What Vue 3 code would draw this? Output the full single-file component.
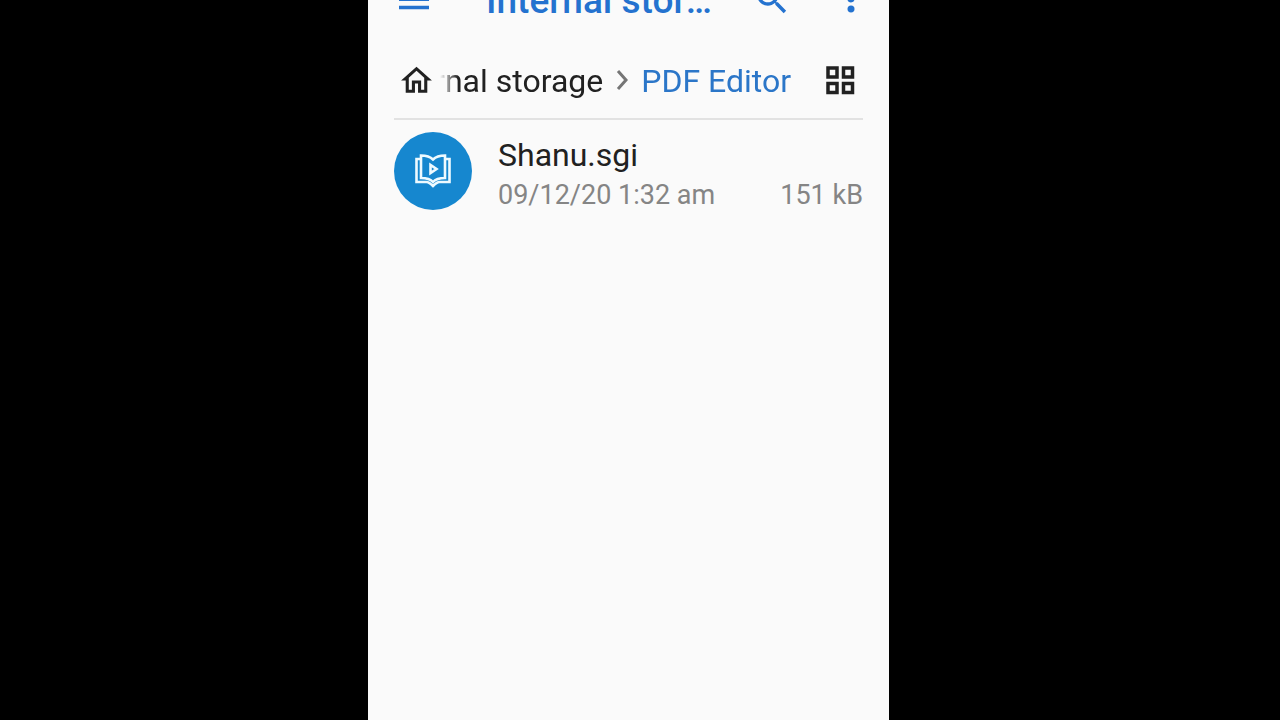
<script setup>
const title = 'Internal storage'
const files = [{ name: 'Shanu.sgi', date: '09/12/20 1:32 am', size: '151 kB' }]
</script>

<template>
  <div class="stage">
    <main class="screen">
      <header class="bar">
        <button class="icon" aria-label="Menu">
          <svg viewBox="0 0 24 24"><path d="M3 18.200h18v-2.200H3v2.200zm0-5h18v-2.200H3v2.200zm0-7.200v2.200h18V6H3z" /></svg>
        </button>
        <h1>{{ title }}</h1>
        <button class="icon search" aria-label="Search">
          <svg viewBox="0 0 24 24">
            <path d="M15.5 14h-.79l-.28-.27A6.47 6.47 0 0 0 16 9.5 6.5 6.5 0 1 0 9.5 16c1.61 0 3.09-.59 4.23-1.57l.27.28v.79l5 4.99L20.49 19l-4.99-5zm-6 0C7.01 14 5 11.99 5 9.5S7.01 5 9.5 5 14 7.01 14 9.5 11.99 14 9.5 14z" />
          </svg>
        </button>
        <button class="icon more" aria-label="More options">
          <svg viewBox="0 0 24 24">
            <circle cx="12" cy="6" r="2.1" /><circle cx="12" cy="12" r="2.1" /><circle cx="12" cy="18" r="2.1" />
          </svg>
        </button>
      </header>

      <nav class="path" aria-label="Folder path">
        <button class="home" aria-label="Home">
          <svg viewBox="0 0 24 24"><path d="M12 5.69l5 4.5V18h-2v-6H9v6H7v-7.81l5-4.5M12 3L2 12h3v8h6v-6h2v6h6v-8h3L12 3z" /></svg>
        </button>
        <div class="crumbs">
          <a href="#storage">{{ title }}</a>
          <svg class="chevron" viewBox="0 0 12 20"><path d="M2 1l8 9-8 9" /></svg>
          <a href="#pdf-editor" class="current" aria-current="page">PDF Editor</a>
        </div>
        <button class="view" aria-label="Grid view">
          <svg viewBox="0 0 30 30">
            <path d="M3 3h9v9H3zM18.500 3h9v9h-9zM3 18.500h9v9H3zM18.500 18.500h9v9h-9z" />
          </svg>
        </button>
      </nav>

      <ul class="files">
        <li v-for="file in files" :key="file.name">
          <span class="badge">
            <svg viewBox="0 0 36 34">
              <path d="M6 1.500c5 0 9 1 12 4 3-3 7-4 12-4v22.500c-5 0-9 .5-12 4-3-3.500-7-4-12-4z" />
              <path d="M6 5H1.500v23h10c2.500 0 4.500 2 6.500 4 2-2 4-4 6.500-4h10V5H30" />
              <path class="play" d="M15.500 11v8l6-4z" />
            </svg>
          </span>
          <div class="info">
            <span class="name">{{ file.name }}</span>
            <div class="meta"><span>{{ file.date }}</span><span>{{ file.size }}</span></div>
          </div>
        </li>
      </ul>
    </main>
  </div>
</template>

<style>
body {
  background: #000;
}
</style>

<style scoped>
.stage {
  display: grid;
  grid-template-columns: 368fr 521fr 391fr;
  min-height: 100vh;
  background: #000;
  font-family: Roboto, "Liberation Sans", sans-serif;
  overflow: hidden;
}
.screen {
  grid-column: 2;
  min-width: 0;
  padding: 0 26px;
  background: #fafafa;
  color: #212121;
}
button {
  flex: none;
  padding: 0;
  border: 0;
  background: none;
  color: inherit;
}
svg {
  display: block;
  width: 100%;
  fill: currentColor;
}
.bar {
  display: flex;
  align-items: center;
  height: 72px;
  margin-top: -37px;
  color: #2472cf;
}
.icon {
  width: 40px;
}
h1 {
  flex: 1;
  min-width: 0;
  margin: 0 32px 0 52px;
  padding-top: 4px;
  overflow: hidden;
  white-space: nowrap;
  text-overflow: ellipsis;
  font-size: 37px;
  line-height: 48px;
  font-weight: 500;
}
.more {
  margin: 0 -8px 0 39px;
}
.path {
  display: flex;
  align-items: center;
  height: 85px;
  padding: 7px 8px 0 4px;
  border-bottom: 2px solid #e2e2e2;
  box-sizing: border-box;
}
.home {
  width: 37px;
}
.crumbs {
  display: flex;
  flex: 1;
  justify-content: flex-end;
  align-items: center;
  min-width: 0;
  margin: 0 34px 0 5px;
  overflow: hidden;
  white-space: nowrap;
  font-size: 32px;
  line-height: 44px;
  mask-image: linear-gradient(to right, transparent, #000 18px);
}
.crumbs a {
  padding-top: 2px;
  color: inherit;
  text-decoration: none;
}
.crumbs .current {
  color: #2b76c8;
}
.chevron {
  flex: none;
  width: 12px;
  margin: 0 13px;
  fill: none;
  stroke: #757575;
  stroke-width: 3;
}
.view {
  width: 30px;
}
.view svg {
  fill: none;
  stroke: currentColor;
  stroke-width: 3.5;
}
.files {
  margin: 0;
  padding: 0;
  list-style: none;
}
li {
  display: flex;
  align-items: flex-start;
  gap: 26px;
  padding: 12px 0;
}
.badge {
  display: grid;
  flex: none;
  place-items: center;
  width: 78px;
  height: 78px;
  border-radius: 50%;
  background: #1687cf;
  color: #eefaff;
}
.badge svg {
  width: 36px;
  fill: none;
  stroke: currentColor;
  stroke-width: 2.6;
}
.info {
  flex: 1;
  min-width: 0;
  padding-top: 3px;
}
.name {
  display: block;
  font-size: 32px;
  line-height: 40px;
}
.meta {
  display: flex;
  justify-content: space-between;
  font-size: 27px;
  line-height: 40px;
  color: #858585;
}
</style>
